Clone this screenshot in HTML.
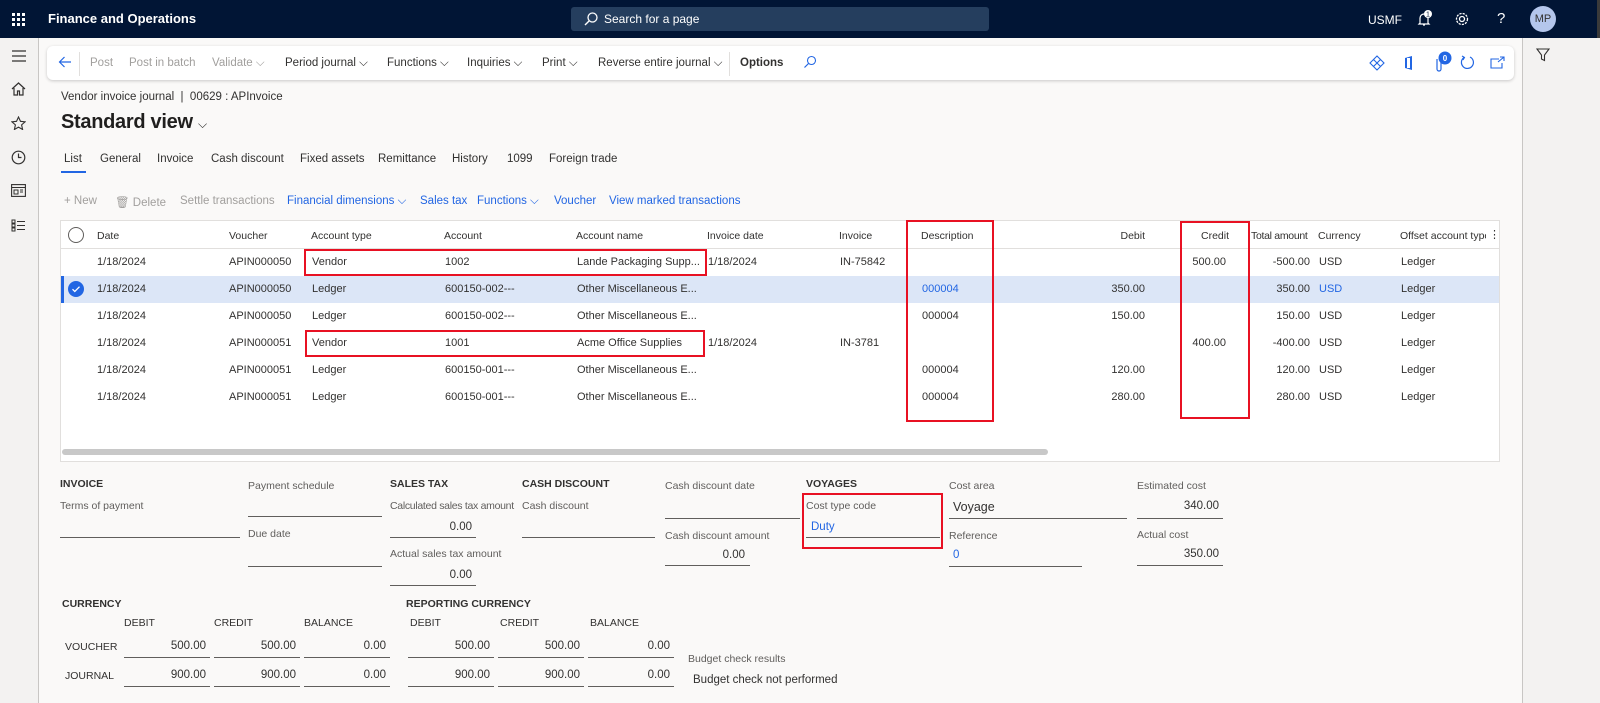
<!DOCTYPE html>
<html><head><meta charset="utf-8"><style>
*{box-sizing:border-box;margin:0;padding:0}
body{width:1600px;height:703px;overflow:hidden;background:#faf9f8;font-family:"Liberation Sans",sans-serif;color:#323130;font-size:11.5px;position:relative}
.a{position:absolute;white-space:nowrap}
.top{position:absolute;left:0;top:0;width:1600px;height:38px;background:#011535}
.nav{position:absolute;left:0;top:38px;width:39px;height:665px;background:#f3f2f1;border-right:1px solid #c8c6c4}
.rp{position:absolute;left:1522px;top:38px;width:78px;height:665px;background:#f3f2f1;border-left:1px solid #c8c6c4}
.ab{position:absolute;left:47px;top:46px;width:1467px;height:34px;background:#fff;border-radius:6px;box-shadow:0 1px 3px rgba(0,0,0,.2)}
.g{color:#a19f9d}.b{color:#2266e3}
.hd{font-size:10.5px;color:#323130}
.grid{position:absolute;left:60px;top:220px;width:1440px;height:242px;background:#fff;border:1px solid #e1dfdd}
.red{position:absolute;border:2px solid #e81123}
.ul{position:absolute;border-bottom:1px solid #605e5c;height:1px}
.lab{font-size:10.5px;color:#605e5c}
.sec{font-size:10.5px;font-weight:bold;color:#323130}
.r{text-align:right}
.cell{font-size:11px}
</style></head><body>
<div class="top"></div>
<svg class="a" style="left:12px;top:13px" width="13" height="13"><g fill="#fff"><rect x="0" y="0" width="3" height="3"/><rect x="5" y="0" width="3" height="3"/><rect x="10" y="0" width="3" height="3"/><rect x="0" y="5" width="3" height="3"/><rect x="5" y="5" width="3" height="3"/><rect x="10" y="5" width="3" height="3"/><rect x="0" y="10" width="3" height="3"/><rect x="5" y="10" width="3" height="3"/><rect x="10" y="10" width="3" height="3"/></g></svg>
<div class="a" style="left:48px;top:11px;color:#fff;font-weight:bold;font-size:13px">Finance and Operations</div>
<div class="a" style="left:571px;top:7px;width:418px;height:24px;background:#253e5e;border-radius:3px"></div>
<svg class="a" style="left:584px;top:12px" width="14" height="14"><circle cx="8.5" cy="5.5" r="4.5" fill="none" stroke="#fff" stroke-width="1.3"/><line x1="5.3" y1="8.7" x2="1" y2="13" stroke="#fff" stroke-width="1.4"/></svg>
<div class="a" style="left:604px;top:12px;color:#fff;font-size:12px">Search for a page</div>
<div class="a" style="left:1368px;top:13px;color:#fff;font-size:12px">USMF</div>
<svg class="a" style="left:1416px;top:10px" width="18" height="18"><path d="M4 13V8a4 4 0 0 1 8 0v5l1 1H3z M7 15h2" fill="none" stroke="#fff" stroke-width="1.2"/><circle cx="12" cy="4" r="4" fill="#fff"/><text x="12" y="6.5" font-size="7" text-anchor="middle" fill="#011535" font-family="Liberation Sans">1</text></svg>
<svg class="a" style="left:1454px;top:11px" width="16" height="16"><circle cx="8" cy="8" r="2.5" fill="none" stroke="#fff" stroke-width="1.3"/><circle cx="8" cy="8" r="5.5" fill="none" stroke="#fff" stroke-width="1.3" stroke-dasharray="2.2 1.1"/></svg>
<div class="a" style="left:1497px;top:10px;color:#fff;font-size:15px">?</div>
<div class="a" style="left:1530px;top:6px;width:26px;height:26px;border-radius:13px;background:#b4c6ec;color:#323130;font-size:11px;text-align:center;line-height:26px">MP</div>
<div class="a" style="left:1597px;top:0;width:3px;height:703px;background:#3a3a3a"></div>

<div class="nav"></div>
<svg class="a" style="left:11px;top:50px" width="16" height="12"><path d="M1 1h14M1 6h14M1 11h14" stroke="#323130" stroke-width="1.2"/></svg>
<svg class="a" style="left:11px;top:82px" width="15" height="14"><path d="M1 7L7.5 1 14 7M3 6v7h3.5V9h2v4H12V6" fill="none" stroke="#323130" stroke-width="1.2"/></svg>
<svg class="a" style="left:11px;top:116px" width="15" height="14"><path d="M7.5 1l2 4.3 4.6.5-3.5 3.1 1 4.6-4.1-2.4-4.1 2.4 1-4.6L.9 5.8l4.6-.5z" fill="none" stroke="#323130" stroke-width="1.1"/></svg>
<svg class="a" style="left:11px;top:150px" width="15" height="15"><circle cx="7.5" cy="7.5" r="6.3" fill="none" stroke="#323130" stroke-width="1.2"/><path d="M7.5 3.5v4h3" fill="none" stroke="#323130" stroke-width="1.2"/></svg>
<svg class="a" style="left:11px;top:184px" width="15" height="13"><rect x="0.6" y="0.6" width="13.8" height="11.8" fill="none" stroke="#323130" stroke-width="1.1"/><path d="M1 3.5h13M3 6h4v4H3zM9 6h3M9 8h3" fill="none" stroke="#323130"/></svg>
<svg class="a" style="left:11px;top:219px" width="15" height="13"><path d="M1 1h3v3H1zM1 5h3v3H1zM1 9h3v3H1zM6 2.5h8M6 6.5h8M6 10.5h8" fill="none" stroke="#323130"/></svg>

<div class="rp"></div>
<svg class="a" style="left:1536px;top:48px" width="14" height="14"><path d="M1 1h12L8.5 7v5.5l-3-1.5V7z" fill="none" stroke="#323130" stroke-width="1.1"/></svg>

<div class="ab"></div>
<svg class="a" style="left:58px;top:56px" width="14" height="12"><path d="M13 6H1.5M6.5 1L1.5 6l5 5" fill="none" stroke="#2266e3" stroke-width="1.2"/></svg>
<div class="a" style="left:79px;top:52px;width:1px;height:24px;background:#e1dfdd"></div>
<div class="a g" style="left:90px;top:57px">Post</div>
<div class="a g" style="left:129px;top:57px">Post in batch</div>
<div class="a g" style="left:212px;top:57px">Validate ⌵</div>
<div class="a" style="left:285px;top:57px">Period journal ⌵</div>
<div class="a" style="left:387px;top:57px">Functions ⌵</div>
<div class="a" style="left:467px;top:57px">Inquiries ⌵</div>
<div class="a" style="left:542px;top:57px">Print ⌵</div>
<div class="a" style="left:598px;top:57px">Reverse entire journal ⌵</div>
<div class="a" style="left:729px;top:52px;width:1px;height:24px;background:#e1dfdd"></div>
<div class="a" style="left:740px;top:57px;font-weight:bold">Options</div>
<svg class="a" style="left:803px;top:55px" width="14" height="14"><circle cx="8.5" cy="5.5" r="4" fill="none" stroke="#2266e3" stroke-width="1.1"/><line x1="5.5" y1="8.5" x2="1.5" y2="12.5" stroke="#2266e3" stroke-width="1.2"/></svg>
<svg class="a" style="left:1369px;top:55px" width="16" height="16"><path d="M8 1l3.5 3.5L8 8 4.5 4.5zM4.5 4.5L1 8l3.5 3.5L8 8zM11.5 4.5L15 8l-3.5 3.5L8 8zM8 8l3.5 3.5L8 15l-3.5-3.5z" fill="none" stroke="#2266e3" stroke-width="1.1"/></svg>
<svg class="a" style="left:1403px;top:55px" width="12" height="16"><path d="M2 3l7-2v14l-7-2z" fill="#2266e3"/><rect x="4" y="3" width="3" height="10" fill="#fff"/></svg>
<svg class="a" style="left:1431px;top:51px" width="22" height="22"><path d="M6 8v10a2 2 0 0 0 4 0V9" fill="none" stroke="#2266e3" stroke-width="1.2"/><circle cx="14" cy="7" r="6.5" fill="#2266e3"/><text x="14" y="10" font-size="8" text-anchor="middle" fill="#fff" font-family="Liberation Sans" font-weight="bold">0</text></svg>
<svg class="a" style="left:1460px;top:55px" width="15" height="15"><path d="M4 2.5A6 6 0 1 0 10 2" fill="none" stroke="#2266e3" stroke-width="1.2"/><path d="M2 1l2.5 1.5L3 5" fill="none" stroke="#2266e3" stroke-width="1.1"/></svg>
<svg class="a" style="left:1490px;top:56px" width="15" height="13"><path d="M9 3H1v9h11V7M8 6l6-5M10 1h4v4" fill="none" stroke="#2266e3" stroke-width="1.1"/></svg>

<div class="a" style="left:61px;top:91px;font-size:11.5px">Vendor invoice journal &nbsp;| &nbsp;00629 : APInvoice</div>
<div class="a" style="left:61px;top:111px;font-size:20px;font-weight:bold;color:#201f1e;letter-spacing:-0.3px">Standard view <span style="font-size:12px;font-weight:normal">⌵</span></div>

<div class="a" style="left:64px;top:153px">List</div>
<div class="a" style="left:61px;top:171px;width:25px;height:2px;background:#2266e3"></div>
<div class="a" style="left:100px;top:153px">General</div>
<div class="a" style="left:157px;top:153px">Invoice</div>
<div class="a" style="left:211px;top:153px">Cash discount</div>
<div class="a" style="left:300px;top:153px">Fixed assets</div>
<div class="a" style="left:378px;top:153px">Remittance</div>
<div class="a" style="left:452px;top:153px">History</div>
<div class="a" style="left:507px;top:153px">1099</div>
<div class="a" style="left:549px;top:153px">Foreign trade</div>

<div class="a g" style="left:64px;top:195px">+ New</div>
<div class="a g" style="left:115px;top:195px">🗑 Delete</div>
<div class="a g" style="left:180px;top:195px">Settle transactions</div>
<div class="a b" style="left:287px;top:195px">Financial dimensions ⌵</div>
<div class="a b" style="left:420px;top:195px">Sales tax</div>
<div class="a b" style="left:477px;top:195px">Functions ⌵</div>
<div class="a b" style="left:554px;top:195px">Voucher</div>
<div class="a b" style="left:609px;top:195px">View marked transactions</div>

<div class="grid"></div>
<div class="a" style="left:61px;top:248px;width:1438px;height:1px;background:#e1dfdd"></div>
<div class="a" style="left:61px;top:276px;width:1438px;height:27px;background:#dce6f7"></div>
<div class="a" style="left:61px;top:276px;width:3px;height:27px;background:#2266e3"></div>
<div class="a" style="left:68px;top:227px;width:16px;height:16px;border-radius:8px;border:1px solid #605e5c"></div>
<svg class="a" style="left:68px;top:281px" width="16" height="16"><circle cx="8" cy="8" r="8" fill="#2266e3"/><path d="M4.5 8.2l2.3 2.3 4.7-4.8" fill="none" stroke="#fff" stroke-width="1.3"/></svg>
<div class="a hd" style="left:97px;top:230px">Date</div>
<div class="a hd" style="left:229px;top:230px">Voucher</div>
<div class="a hd" style="left:311px;top:230px">Account type</div>
<div class="a hd" style="left:444px;top:230px">Account</div>
<div class="a hd" style="left:576px;top:230px">Account name</div>
<div class="a hd" style="left:707px;top:230px">Invoice date</div>
<div class="a hd" style="left:839px;top:230px">Invoice</div>
<div class="a hd" style="left:921px;top:230px">Description</div>
<div class="a hd r" style="left:1080px;width:65px;top:230px">Debit</div>
<div class="a hd" style="left:1201px;top:230px">Credit</div>
<div class="a hd" style="left:1251px;top:230px;letter-spacing:-0.3px">Total amount</div>
<div class="a hd" style="left:1318px;top:230px">Currency</div>
<div class="a hd" style="left:1400px;top:230px;width:86px;overflow:hidden">Offset account type</div>
<div class="a" style="left:1489px;top:228px;font-size:11px">⋮</div>

<div class="cell">
<div class="a" style="left:97px;top:256px">1/18/2024</div><div class="a" style="left:229px;top:256px">APIN000050</div><div class="a" style="left:312px;top:256px">Vendor</div><div class="a" style="left:445px;top:256px">1002</div><div class="a" style="left:577px;top:256px;width:125px;overflow:hidden">Lande Packaging Supp...</div><div class="a" style="left:708px;top:256px">1/18/2024</div><div class="a" style="left:840px;top:256px">IN-75842</div><div class="a r" style="left:1160px;width:66px;top:256px">500.00</div><div class="a r" style="left:1240px;width:70px;top:256px">-500.00</div><div class="a" style="left:1319px;top:256px">USD</div><div class="a" style="left:1401px;top:256px">Ledger</div>

<div class="a" style="left:97px;top:283px">1/18/2024</div><div class="a" style="left:229px;top:283px">APIN000050</div><div class="a" style="left:312px;top:283px">Ledger</div><div class="a" style="left:445px;top:283px">600150-002---</div><div class="a" style="left:577px;top:283px">Other Miscellaneous E...</div><div class="a b" style="left:922px;top:283px">000004</div><div class="a r" style="left:1070px;width:75px;top:283px">350.00</div><div class="a r" style="left:1240px;width:70px;top:283px">350.00</div><div class="a b" style="left:1319px;top:283px">USD</div><div class="a" style="left:1401px;top:283px">Ledger</div>

<div class="a" style="left:97px;top:310px">1/18/2024</div><div class="a" style="left:229px;top:310px">APIN000050</div><div class="a" style="left:312px;top:310px">Ledger</div><div class="a" style="left:445px;top:310px">600150-002---</div><div class="a" style="left:577px;top:310px">Other Miscellaneous E...</div><div class="a" style="left:922px;top:310px">000004</div><div class="a r" style="left:1070px;width:75px;top:310px">150.00</div><div class="a r" style="left:1240px;width:70px;top:310px">150.00</div><div class="a" style="left:1319px;top:310px">USD</div><div class="a" style="left:1401px;top:310px">Ledger</div>

<div class="a" style="left:97px;top:337px">1/18/2024</div><div class="a" style="left:229px;top:337px">APIN000051</div><div class="a" style="left:312px;top:337px">Vendor</div><div class="a" style="left:445px;top:337px">1001</div><div class="a" style="left:577px;top:337px">Acme Office Supplies</div><div class="a" style="left:708px;top:337px">1/18/2024</div><div class="a" style="left:840px;top:337px">IN-3781</div><div class="a r" style="left:1160px;width:66px;top:337px">400.00</div><div class="a r" style="left:1240px;width:70px;top:337px">-400.00</div><div class="a" style="left:1319px;top:337px">USD</div><div class="a" style="left:1401px;top:337px">Ledger</div>

<div class="a" style="left:97px;top:364px">1/18/2024</div><div class="a" style="left:229px;top:364px">APIN000051</div><div class="a" style="left:312px;top:364px">Ledger</div><div class="a" style="left:445px;top:364px">600150-001---</div><div class="a" style="left:577px;top:364px">Other Miscellaneous E...</div><div class="a" style="left:922px;top:364px">000004</div><div class="a r" style="left:1070px;width:75px;top:364px">120.00</div><div class="a r" style="left:1240px;width:70px;top:364px">120.00</div><div class="a" style="left:1319px;top:364px">USD</div><div class="a" style="left:1401px;top:364px">Ledger</div>

<div class="a" style="left:97px;top:391px">1/18/2024</div><div class="a" style="left:229px;top:391px">APIN000051</div><div class="a" style="left:312px;top:391px">Ledger</div><div class="a" style="left:445px;top:391px">600150-001---</div><div class="a" style="left:577px;top:391px">Other Miscellaneous E...</div><div class="a" style="left:922px;top:391px">000004</div><div class="a r" style="left:1070px;width:75px;top:391px">280.00</div><div class="a r" style="left:1240px;width:70px;top:391px">280.00</div><div class="a" style="left:1319px;top:391px">USD</div><div class="a" style="left:1401px;top:391px">Ledger</div>
</div>

<div class="a" style="left:62px;width:986px;height:6px;border-radius:3px;background:#c8c8c8;top:449px"></div>

<div class="red" style="left:304px;top:249px;width:403px;height:27px"></div>
<div class="red" style="left:305px;top:330px;width:400px;height:27px"></div>
<div class="red" style="left:906px;top:220px;width:88px;height:202px"></div>
<div class="red" style="left:1180px;top:221px;width:70px;height:198px"></div>
<div class="red" style="left:802px;top:493px;width:141px;height:56px"></div>

<div class="a sec" style="left:60px;top:478px">INVOICE</div>
<div class="a lab" style="left:60px;top:500px">Terms of payment</div>
<div class="ul" style="left:60px;top:537px;width:180px"></div>
<div class="a lab" style="left:248px;top:480px">Payment schedule</div>
<div class="ul" style="left:248px;top:516px;width:134px"></div>
<div class="a lab" style="left:248px;top:528px">Due date</div>
<div class="ul" style="left:248px;top:566px;width:134px"></div>
<div class="a sec" style="left:390px;top:478px">SALES TAX</div>
<div class="a lab" style="left:390px;top:500px;letter-spacing:-0.3px">Calculated sales tax amount</div>
<div class="a r" style="left:390px;width:82px;top:521px">0.00</div>
<div class="ul" style="left:390px;top:537px;width:86px"></div>
<div class="a lab" style="left:390px;top:548px">Actual sales tax amount</div>
<div class="a r" style="left:390px;width:82px;top:569px">0.00</div>
<div class="ul" style="left:390px;top:585px;width:86px"></div>
<div class="a sec" style="left:522px;top:478px">CASH DISCOUNT</div>
<div class="a lab" style="left:522px;top:500px">Cash discount</div>
<div class="ul" style="left:522px;top:537px;width:133px"></div>
<div class="a lab" style="left:665px;top:480px">Cash discount date</div>
<div class="ul" style="left:665px;top:518px;width:135px"></div>
<div class="a lab" style="left:665px;top:530px">Cash discount amount</div>
<div class="a r" style="left:665px;width:80px;top:549px">0.00</div>
<div class="ul" style="left:665px;top:565px;width:85px"></div>
<div class="a sec" style="left:806px;top:478px">VOYAGES</div>
<div class="a lab" style="left:806px;top:500px">Cost type code</div>
<div class="a b" style="left:811px;top:521px">Duty</div>
<div class="ul" style="left:806px;top:537px;width:134px"></div>
<div class="a lab" style="left:949px;top:480px">Cost area</div>
<div class="a" style="left:953px;top:500px;font-size:12.5px">Voyage</div>
<div class="ul" style="left:949px;top:518px;width:178px"></div>
<div class="a lab" style="left:949px;top:530px">Reference</div>
<div class="a b" style="left:953px;top:549px">0</div>
<div class="ul" style="left:949px;top:566px;width:133px"></div>
<div class="a lab" style="left:1137px;top:480px">Estimated cost</div>
<div class="a r" style="left:1137px;width:82px;top:500px">340.00</div>
<div class="ul" style="left:1137px;top:518px;width:86px"></div>
<div class="a lab" style="left:1137px;top:529px">Actual cost</div>
<div class="a r" style="left:1137px;width:82px;top:548px">350.00</div>
<div class="ul" style="left:1137px;top:565px;width:86px"></div>

<div class="a sec" style="left:62px;top:598px">CURRENCY</div>
<div class="a sec" style="left:406px;top:598px">REPORTING CURRENCY</div>
<div class="a sec" style="left:124px;top:617px;font-weight:normal">DEBIT</div>
<div class="a sec" style="left:214px;top:617px;font-weight:normal">CREDIT</div>
<div class="a sec" style="left:304px;top:617px;font-weight:normal">BALANCE</div>
<div class="a sec" style="left:410px;top:617px;font-weight:normal">DEBIT</div>
<div class="a sec" style="left:500px;top:617px;font-weight:normal">CREDIT</div>
<div class="a sec" style="left:590px;top:617px;font-weight:normal">BALANCE</div>
<div class="a sec" style="left:65px;top:641px;font-weight:normal">VOUCHER</div>
<div class="a sec" style="left:65px;top:670px;font-weight:normal">JOURNAL</div>

<div class="a r" style="left:124px;width:82px;top:640px">500.00</div><div class="ul" style="left:124px;top:657px;width:86px"></div>
<div class="a r" style="left:214px;width:82px;top:640px">500.00</div><div class="ul" style="left:214px;top:657px;width:86px"></div>
<div class="a r" style="left:304px;width:82px;top:640px">0.00</div><div class="ul" style="left:304px;top:657px;width:86px"></div>
<div class="a r" style="left:408px;width:82px;top:640px">500.00</div><div class="ul" style="left:408px;top:657px;width:86px"></div>
<div class="a r" style="left:498px;width:82px;top:640px">500.00</div><div class="ul" style="left:498px;top:657px;width:86px"></div>
<div class="a r" style="left:588px;width:82px;top:640px">0.00</div><div class="ul" style="left:588px;top:657px;width:86px"></div>
<div class="a r" style="left:124px;width:82px;top:669px">900.00</div><div class="ul" style="left:124px;top:686px;width:86px"></div>
<div class="a r" style="left:214px;width:82px;top:669px">900.00</div><div class="ul" style="left:214px;top:686px;width:86px"></div>
<div class="a r" style="left:304px;width:82px;top:669px">0.00</div><div class="ul" style="left:304px;top:686px;width:86px"></div>
<div class="a r" style="left:408px;width:82px;top:669px">900.00</div><div class="ul" style="left:408px;top:686px;width:86px"></div>
<div class="a r" style="left:498px;width:82px;top:669px">900.00</div><div class="ul" style="left:498px;top:686px;width:86px"></div>
<div class="a r" style="left:588px;width:82px;top:669px">0.00</div><div class="ul" style="left:588px;top:686px;width:86px"></div>
<div class="a lab" style="left:688px;top:653px">Budget check results</div>
<div class="a" style="left:693px;top:674px">Budget check not performed</div>
</body></html>
